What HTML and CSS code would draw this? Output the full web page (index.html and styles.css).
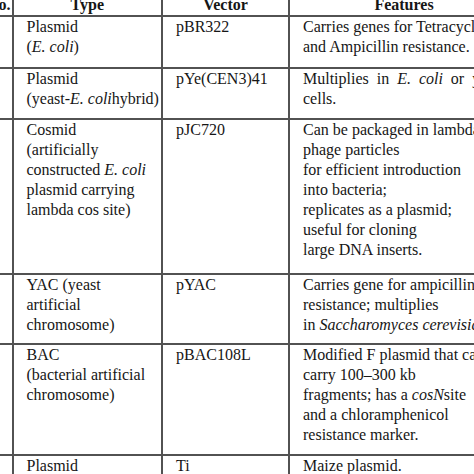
FILE: index.html
```html
<!DOCTYPE html>
<html lang="en">
<head>
<meta charset="utf-8">
<title>Cloning vectors</title>
<link rel="stylesheet" href="styles.css">
</head>
<body>
<table class="vectors">
  <colgroup>
    <col class="c-no">
    <col class="c-type">
    <col class="c-vector">
    <col class="c-feat">
  </colgroup>
  <thead>
    <tr>
      <th>S. No.</th>
      <th>Type</th>
      <th>Vector</th>
      <th>Features</th>
    </tr>
  </thead>
  <tbody>
    <tr class="r-a">
      <td class="no">1.</td>
      <td>Plasmid<br>(<i>E. coli</i>)</td>
      <td>pBR322</td>
      <td>Carries genes for Tetracycline<br>and Ampicillin resistance.</td>
    </tr>
    <tr class="r-a">
      <td class="no">2.</td>
      <td>Plasmid<br>(yeast-<i>E. coli</i>hybrid)</td>
      <td>pYe(CEN3)41</td>
      <td class="just">Multiplies in <i>E. coli</i> or yeast cells.</td>
    </tr>
    <tr class="r-b">
      <td class="no">3.</td>
      <td>Cosmid<br>(artificially<br>constructed <i>E. coli</i><br>plasmid carrying<br>lambda cos site)</td>
      <td>pJC720</td>
      <td>Can be packaged in lambda<br>phage particles<br>for efficient introduction<br>into bacteria;<br>replicates as a plasmid;<br>useful for cloning<br>large DNA inserts.</td>
    </tr>
    <tr class="r-c">
      <td class="no">4.</td>
      <td>YAC (yeast<br>artificial<br>chromosome)</td>
      <td>pYAC</td>
      <td>Carries gene for ampicillin<br>resistance; multiplies<br>in <i>Saccharomyces cerevisiae</i></td>
    </tr>
    <tr class="r-d">
      <td class="no">5.</td>
      <td>BAC<br>(bacterial artificial<br>chromosome)</td>
      <td>pBAC108L</td>
      <td>Modified F plasmid that can<br>carry 100–300 kb<br>fragments; has a <i>cosN</i>site<br>and a chloramphenicol<br>resistance marker.</td>
    </tr>
    <tr class="r-d">
      <td class="no">6.</td>
      <td>Plasmid<br>(<i>Agrobacterium</i>)</td>
      <td>Ti</td>
      <td>Maize plasmid.<br>Transfers genes to plants.</td>
    </tr>
  </tbody>
</table>
</body>
</html>
```

FILE: styles.css
```css
html, body {
  margin: 0;
  padding: 0;
  background: #ffffff;
  overflow: hidden;
  width: 474px;
  height: 474px;
}

.vectors {
  border-collapse: collapse;
  table-layout: fixed;
  width: 550px;
  margin-left: -31px;
  margin-top: -5px;
  font-family: "Liberation Serif", "Times New Roman", serif;
  font-size: 16px;
  line-height: 20px;
  color: #161616;
}

.c-no { width: 43.5px; }
.c-type { width: 149.5px; }
.c-vector { width: 127px; }
.c-feat { width: 230px; }

.vectors th,
.vectors td {
  border: 2px solid #525252;
  vertical-align: top;
  text-align: left;
  padding: 0 13px 9.5px 13px;
  white-space: nowrap;
}

.vectors th {
  font-weight: bold;
  text-align: center;
  padding: 0;
  border-top: none;
}

.vectors tr > :first-child {
  border-left: none;
  padding-left: 0;
  padding-right: 0;
  text-align: center;
}

.vectors td.just {
  white-space: normal;
  text-align: justify;
}

.r-b td { padding-bottom: 13px; }
.r-c td { padding-bottom: 8px; }
.r-d td { padding-bottom: 9px; }
```
